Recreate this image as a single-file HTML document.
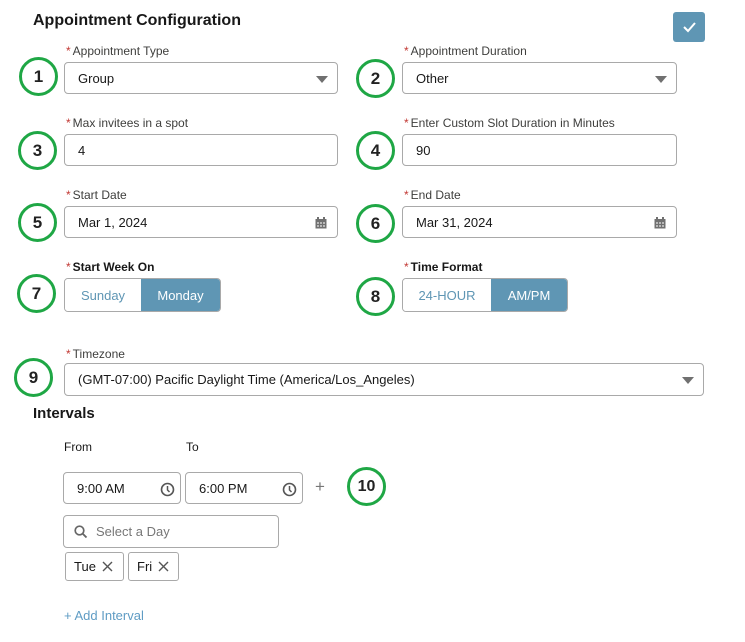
<!DOCTYPE html>
<html><head><style>
*{box-sizing:border-box;margin:0;padding:0}
body{width:745px;height:642px;background:#fff;font-family:"Liberation Sans",sans-serif;color:#181818;position:relative;overflow:hidden}
.a{position:absolute}
.t{font-size:16px;font-weight:bold;color:#181818}
.lbl{font-size:12px;color:#3e3e3c}
.lbl b{color:#c23934;font-weight:normal;margin-right:2px}
.bl{font-weight:bold;color:#181818}
.in{border:1px solid #a9a9a9;border-radius:4px;background:#fff;font-size:13px;display:flex;align-items:center;padding-left:13px}
.c{width:39px;height:39px;border:3px solid #1fa745;border-radius:50%;display:flex;align-items:center;justify-content:center;font-weight:bold;font-size:17px;color:#222}
.arr{position:absolute;right:9px;top:13px;width:0;height:0;border-left:6px solid transparent;border-right:6px solid transparent;border-top:7px solid #707070}
.tg{border:1px solid #a9a9a9;border-radius:4px;display:flex;overflow:hidden;font-size:13px}
.tg div{display:flex;align-items:center;justify-content:center}
.on{background:#5f96b4;color:#fff}
.off{color:#5f96b4;background:#fff}
.pill{border:1px solid #a9a9a9;border-radius:3px;font-size:13px;display:flex;align-items:center;padding-left:8px;gap:6px}
</style></head><body>
<div class="a t" style="left:33px;top:12px">Appointment Configuration</div>
<div class="a" style="left:673px;top:12px;width:32px;height:30px;background:#5f96b4;border-radius:3px"><svg width="32" height="30"><path d="M11 15l4 4 7-8" stroke="#fff" stroke-width="2" fill="none"/></svg></div>

<div class="a lbl" style="left:66px;top:44px"><b>*</b>Appointment Type</div>
<div class="a in" style="left:64px;top:62px;width:274px;height:32px">Group<span class="arr"></span></div>
<div class="a c" style="left:19px;top:57px">1</div>
<div class="a lbl" style="left:404px;top:44px"><b>*</b>Appointment Duration</div>
<div class="a in" style="left:402px;top:62px;width:275px;height:32px">Other<span class="arr"></span></div>
<div class="a c" style="left:356px;top:59px">2</div>

<div class="a lbl" style="left:66px;top:116px"><b>*</b>Max invitees in a spot</div>
<div class="a in" style="left:64px;top:134px;width:274px;height:32px">4</div>
<div class="a c" style="left:18px;top:131px">3</div>
<div class="a lbl" style="left:404px;top:116px"><b>*</b>Enter Custom Slot Duration in Minutes</div>
<div class="a in" style="left:402px;top:134px;width:275px;height:32px">90</div>
<div class="a c" style="left:356px;top:131px">4</div>

<div class="a lbl" style="left:66px;top:188px"><b>*</b>Start Date</div>
<div class="a in" style="left:64px;top:206px;width:274px;height:32px">Mar 1, 2024<svg class="a" style="right:10px;top:10px" width="12" height="12"><rect x="0.5" y="2" width="11" height="9.5" fill="#707070"/><rect x="2" y="0" width="2" height="3" fill="#707070"/><rect x="8" y="0" width="2" height="3" fill="#707070"/><path d="M2 6h2M5 6h2M8 6h2M2 9h2M5 9h2M8 9h2" stroke="#fff"/></svg></div>
<div class="a c" style="left:18px;top:203px">5</div>
<div class="a lbl" style="left:404px;top:188px"><b>*</b>End Date</div>
<div class="a in" style="left:402px;top:206px;width:275px;height:32px">Mar 31, 2024<svg class="a" style="right:10px;top:10px" width="12" height="12"><rect x="0.5" y="2" width="11" height="9.5" fill="#707070"/><rect x="2" y="0" width="2" height="3" fill="#707070"/><rect x="8" y="0" width="2" height="3" fill="#707070"/><path d="M2 6h2M5 6h2M8 6h2M2 9h2M5 9h2M8 9h2" stroke="#fff"/></svg></div>
<div class="a c" style="left:356px;top:204px">6</div>

<div class="a lbl bl" style="left:66px;top:260px"><b>*</b>Start Week On</div>
<div class="a tg" style="left:64px;top:278px;width:157px;height:34px"><div class="off" style="width:76px">Sunday</div><div class="on" style="flex:1">Monday</div></div>
<div class="a c" style="left:17px;top:274px">7</div>
<div class="a lbl bl" style="left:404px;top:260px"><b>*</b>Time Format</div>
<div class="a tg" style="left:402px;top:278px;width:166px;height:34px"><div class="off" style="width:88px">24-HOUR</div><div class="on" style="flex:1">AM/PM</div></div>
<div class="a c" style="left:356px;top:277px">8</div>

<div class="a lbl" style="left:66px;top:347px"><b>*</b>Timezone</div>
<div class="a in" style="left:64px;top:363px;width:640px;height:33px">(GMT-07:00) Pacific Daylight Time (America/Los_Angeles)<span class="arr"></span></div>
<div class="a c" style="left:14px;top:358px">9</div>

<div class="a t" style="left:33px;top:405px;font-size:15px">Intervals</div>
<div class="a" style="left:64px;top:440px;font-size:12px">From</div>
<div class="a" style="left:186px;top:440px;font-size:12px">To</div>
<div class="a in" style="left:63px;top:472px;width:118px;height:32px">9:00 AM<svg class="a" style="right:5px;top:9px" width="15" height="15"><circle cx="7.5" cy="7.5" r="6" stroke="#555" stroke-width="1.6" fill="none"/><path d="M7.5 4v4l2 2" stroke="#555" stroke-width="1.5" fill="none"/></svg></div>
<div class="a in" style="left:185px;top:472px;width:118px;height:32px">6:00 PM<svg class="a" style="right:5px;top:9px" width="15" height="15"><circle cx="7.5" cy="7.5" r="6" stroke="#555" stroke-width="1.6" fill="none"/><path d="M7.5 4v4l2 2" stroke="#555" stroke-width="1.5" fill="none"/></svg></div>
<div class="a" style="left:315px;top:477px;font-size:17px;color:#777">+</div>
<div class="a c" style="left:347px;top:467px;font-size:16px">10</div>
<div class="a in" style="left:63px;top:515px;width:216px;height:33px;color:#777;padding-left:10px"><svg width="14" height="14" style="margin-right:8px"><circle cx="5.5" cy="5.5" r="4.3" stroke="#666" stroke-width="1.7" fill="none"/><path d="M8.5 8.5l4 4" stroke="#666" stroke-width="1.9"/></svg>Select a Day</div>
<div class="a pill" style="left:65px;top:552px;width:59px;height:29px">Tue <svg width="11" height="11"><path d="M1 1l9 9M10 1l-9 9" stroke="#555" stroke-width="1.4"/></svg></div>
<div class="a pill" style="left:128px;top:552px;width:51px;height:29px">Fri <svg width="11" height="11"><path d="M1 1l9 9M10 1l-9 9" stroke="#555" stroke-width="1.4"/></svg></div>
<div class="a" style="left:64px;top:608px;font-size:13px;color:#5f9cc4">+ Add Interval</div>
</body></html>
